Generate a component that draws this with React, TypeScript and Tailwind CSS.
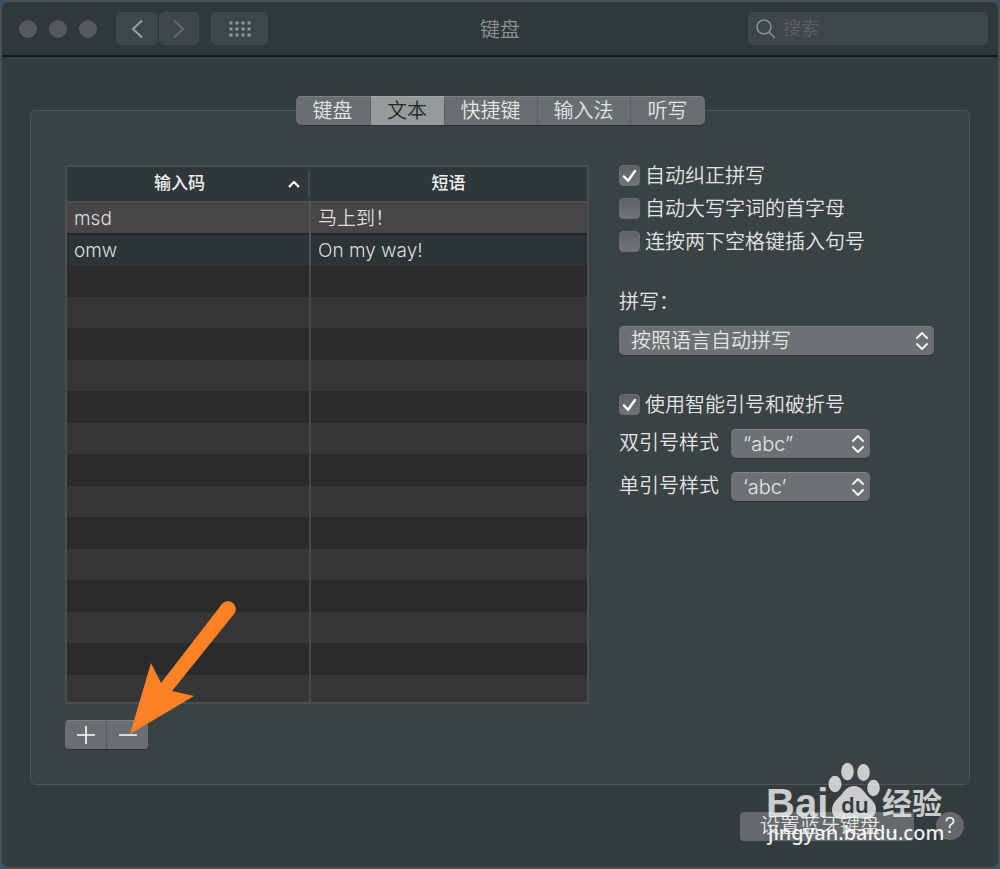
import { useState } from "react"
import type { ReactNode } from "react"

const tabs = [
  { label: "键盘", width: "w-[75px]" },
  { label: "文本", width: "w-[74px]" },
  { label: "快捷键", width: "w-[93px]" },
  { label: "输入法", width: "w-[93px]" },
  { label: "听写", width: "w-[74px]" },
]

const phrases = [
  { code: "msd", text: "马上到！", row: "h-8 bg-[#484546] border-b-2 border-[#232626]" },
  { code: "omw", text: "On my way!", row: "h-[31px] bg-[#2d3436]" },
]

const emptyRows = Array.from({ length: 14 }, (_, i) => i)

function Check({ id, label, defaultChecked = false }: { id: string; label: string; defaultChecked?: boolean }) {
  return (
    <div className="flex h-[33px] items-center gap-[5px]">
      <span className="relative flex size-[21px]">
        <input id={id} type="checkbox" defaultChecked={defaultChecked}
          className="peer size-[21px] appearance-none rounded-[4px] border border-[#696e70] bg-linear-to-b from-[#5d6264] to-[#707577]" />
        <svg viewBox="0 0 21 21" className="pointer-events-none absolute inset-0 hidden peer-checked:block"
          fill="none" stroke="#fff" strokeWidth="2.4" strokeLinecap="round" strokeLinejoin="round">
          <path d="M5 11.5l4 4.3L16 6" />
        </svg>
      </span>
      <label htmlFor={id}>{label}</label>
    </div>
  )
}

function Popup({ id, options, label, className }: { id: string; options: string[]; label?: string; className: string }) {
  return (
    <span className={`relative flex ${className}`}>
      <select id={id} aria-label={label}
        className="h-[29px] w-full appearance-none rounded-[5px] border-t border-[#7f8486] bg-[#6c7173] pl-3 leading-[26px] shadow-[0_1px_1px_#2c3133]">
        {options.map(o => <option key={o}>{o}</option>)}
      </select>
      <svg viewBox="0 0 14 20" className="pointer-events-none absolute right-[5px] top-[5px] h-5 w-[14px]"
        fill="none" stroke="#f2f3f3" strokeWidth="2" strokeLinecap="round" strokeLinejoin="round">
        <path d="M2 7l5-5 5 5M2 13l5 5 5-5" />
      </svg>
    </span>
  )
}

function ToolButton({ label, className, children }: { label: string; className: string; children: ReactNode }) {
  return (
    <button aria-label={label}
      className={`flex h-[33px] items-center justify-center rounded-[5px] border border-[#434a4c] bg-[#3f4648] ${className}`}>
      {children}
    </button>
  )
}

function TitleBar() {
  return (
    <header className="grid h-[55px] grid-cols-[1fr_auto_1fr] items-center border-b-2 border-[#15191a] bg-[#31383a] px-[10px]">
      <div className="flex items-center pl-[7px]">
        <div className="flex gap-3">
          <span className="size-[18px] rounded-full bg-[#54595b]" />
          <span className="size-[18px] rounded-full bg-[#54595b]" />
          <span className="size-[18px] rounded-full bg-[#54595b]" />
        </div>
        <div className="ml-[19px] flex gap-[2px]">
          <ToolButton label="后退" className="w-[41px]">
            <svg viewBox="0 0 12 20" className="h-5 w-3" fill="none" stroke="#999fa1" strokeWidth="2">
              <path d="M11 1.5L2 10l9 8.5" />
            </svg>
          </ToolButton>
          <ToolButton label="前进" className="w-10">
            <svg viewBox="0 0 12 20" className="h-5 w-3" fill="none" stroke="#656b6d" strokeWidth="2">
              <path d="M1 1.5l9 8.5-9 8.5" />
            </svg>
          </ToolButton>
        </div>
        <ToolButton label="显示全部" className="ml-3 w-[57px]">
          <svg viewBox="0 0 22 16" className="h-4 w-[22px]" fill="#92989a">
            {[0, 6, 12].map(y => [0, 6, 12, 18].map(x => (
              <rect key={`${x}-${y}`} x={x + 0.5} y={y + 0.5} width="3" height="3" />
            )))}
          </svg>
        </ToolButton>
      </div>
      <h1 className="pt-[2px] text-[20px] text-[#8d9395]">键盘</h1>
      <label className="flex h-[33px] w-60 items-center gap-[7px] justify-self-end rounded-[5px] border border-[#434a4c] bg-[#3f4648] pl-[7px]">
        <svg viewBox="0 0 20 20" className="size-5 shrink-0" fill="none" stroke="#858b8d" strokeWidth="1.7">
          <circle cx="8" cy="8" r="7" />
          <path d="M13 13l6 6" />
        </svg>
        <input type="search" placeholder="搜索" aria-label="搜索"
          className="w-full min-w-0 bg-transparent text-[18px] outline-none placeholder:text-[#5b6163]" />
      </label>
    </header>
  )
}

function PhraseTable() {
  return (
    <div className="h-[539px] overflow-hidden border-2 border-[#4a5052] bg-[#2c2c2c]">
      <table className="w-full table-fixed border-collapse">
        <thead>
          <tr className="h-[35px] border-b-2 border-[#4a5052] bg-[#30373a] text-[17px] text-[#f0f2f2]">
            <th className="w-[243px] p-0 font-medium">
              <div className="relative border-r-2 border-[#454c4e] pr-4">
                输入码
                <svg viewBox="0 0 12 8" className="absolute right-2 top-[9px] h-2 w-3" fill="none" stroke="#fff" strokeWidth="2.2">
                  <path d="M1 7l5-5 5 5" />
                </svg>
              </div>
            </th>
            <th className="p-0 font-medium">短语</th>
          </tr>
        </thead>
        <tbody className="text-[#dcdfdf]">
          {phrases.map(p => (
            <tr key={p.code} className={p.row}>
              <td className="border-r-2 border-r-[#515658] p-0 pl-[7px] leading-[29px]">{p.code}</td>
              <td className="p-0 pl-[7px] leading-[29px]">{p.text}</td>
            </tr>
          ))}
          {emptyRows.map(i => (
            <tr key={i} className="h-8 even:h-[31px] odd:bg-[#2b2b2b] even:bg-[#363636]">
              <td className="border-r-2 border-[#474a4a] p-0" />
              <td className="p-0" />
            </tr>
          ))}
        </tbody>
      </table>
    </div>
  )
}

function Arrow() {
  return (
    <svg viewBox="0 0 108 136" className="pointer-events-none absolute bottom-[13px] left-[64px] h-[136px] w-[108px]" fill="#ff8126">
      <path d="M1 134L22 63l10 20L93 4a7.500 7.500 0 0 1 12 10L43 91l22 5z" />
    </svg>
  )
}

function Watermark() {
  return (
    <svg viewBox="0 0 182 88" className="pointer-events-none absolute bottom-[20px] right-[51px] h-[88px] w-[182px]"
      fill="#fff" fontFamily="'Liberation Sans', sans-serif">
      <g opacity="0.74">
        <text x="1" y="58" fontSize="40" fontWeight="700">Bai</text>
        <ellipse cx="70" cy="25" rx="6.500" ry="8.300" />
        <ellipse cx="82.500" cy="12.500" rx="6.300" ry="8.800" />
        <ellipse cx="98.500" cy="13.500" rx="6.300" ry="8.500" />
        <ellipse cx="108.500" cy="29" rx="6.300" ry="8.300" />
        <path d="M89 27c-6 0-9 4-12 8-3 4-10 8-10 16 0 6 4 9 9 9 5 0 8-1 13-1s8 1 13 1c5 0 9-4 9-10 0-7-6-10-10-15-3-4-6-8-12-8z" />
        <text x="117" y="55" fontSize="30" fontWeight="700" fontFamily="'Noto Sans CJK SC', sans-serif">经验</text>
      </g>
      <text x="76" y="54" fontSize="22" fontWeight="600" fontFamily="'Noto Sans', sans-serif" fill="#343b3d">du</text>
      <text x="3" y="81" fontSize="20" fontWeight="500" fontFamily="'Noto Sans', sans-serif" opacity="0.92">jingyan.baidu.com</text>
    </svg>
  )
}

export default function App() {
  const [tab, setTab] = useState("文本")

  return (
    <div className="min-h-screen bg-[#2f5577] font-['Inter','Noto_Sans_CJK_SC',sans-serif] text-[19px] font-[350] text-[#e3e6e6]">
      <main className="relative flex min-h-screen flex-col overflow-hidden rounded-lg border-2 border-[#4a5254] bg-[#353c3e]">
        <TitleBar />

        <div className="px-7 pt-[39px]">
          <nav className="relative z-10 -mb-[15px] flex justify-center">
            <div className="flex overflow-hidden rounded-[5px] shadow-[0_1px_1px_#2c3133]">
              {tabs.map(t => (
                <button key={t.label} onClick={() => setTab(t.label)}
                  className={`h-[29px] border-r border-t border-r-[#595e60] pt-px text-[20px] leading-[27px] last:border-r-0 ${t.width} ${
                    t.label === tab ? "border-t-[#a5a9aa] bg-[#969a9b] text-[#222728]" : "border-t-[#7b8082] bg-[#696e70]"
                  }`}>
                  {t.label}
                </button>
              ))}
            </div>
          </nav>

          <div className="flex h-[675px] gap-[30px] rounded-[6px] border border-[#4f5658] bg-[#3b4244] pl-[34px] pr-[35px] pt-[54px]">
            <section className="relative min-w-0 flex-1 self-start">
              <PhraseTable />
              <div className="mt-4 flex w-fit overflow-hidden rounded-[4px] shadow-[0_1px_1px_#2c3133]">
                <button aria-label="添加" className="flex h-[29px] w-[42px] items-center justify-center border-r border-t border-r-[#565b5d] border-t-[#7b8082] bg-[#696e70]">
                  <svg viewBox="0 0 18 18" className="size-[18px]" stroke="#fff" strokeWidth="1.6"><path d="M9 0v18M0 9h18" /></svg>
                </button>
                <button aria-label="删除" className="flex h-[29px] w-[41px] items-center justify-center border-t border-[#7b8082] bg-[#696e70]">
                  <svg viewBox="0 0 18 18" className="size-[18px]" stroke="#fff" strokeWidth="1.6"><path d="M0 9h18" /></svg>
                </button>
              </div>
              <Arrow />
            </section>

            <section className="w-[315px] shrink-0 text-[20px]">
              <div className="-mt-[6px]">
                <Check id="autocorrect" label="自动纠正拼写" defaultChecked />
                <Check id="capitalize" label="自动大写字词的首字母" />
                <Check id="period" label="连按两下空格键插入句号" />
              </div>
              <label htmlFor="spelling" className="mt-[29px] block leading-[30px]">拼写：</label>
              <Popup id="spelling" className="mt-[9px]" options={["按照语言自动拼写", "简体中文", "English"]} />

              <div className="mt-[33px]">
                <Check id="smart-quotes" label="使用智能引号和破折号" defaultChecked />
              </div>
              <div className="mt-[7px] flex items-center gap-3">
                <label htmlFor="double-quotes" className="w-[100px]">双引号样式</label>
                <Popup id="double-quotes" className="w-[139px]" options={["“abc”", "«abc»"]} />
              </div>
              <div className="mt-[13px] flex items-center gap-3">
                <label htmlFor="single-quotes" className="w-[100px]">单引号样式</label>
                <Popup id="single-quotes" className="w-[139px]" options={["‘abc’", "‹abc›"]} />
              </div>
            </section>
          </div>
        </div>

        <footer className="flex justify-end gap-[22px] pb-[25px] pr-[34px] pt-[27px]">
          <button className="h-[29px] w-[174px] rounded-[4px] bg-[#65696c] pl-5 text-left text-[20px] leading-[29px]">设置蓝牙键盘...</button>
          <button aria-label="帮助" className="size-[28px] rounded-full bg-[#65696c] text-[21px] leading-[28px] text-white">?</button>
        </footer>
        <Watermark />
      </main>
    </div>
  )
}
